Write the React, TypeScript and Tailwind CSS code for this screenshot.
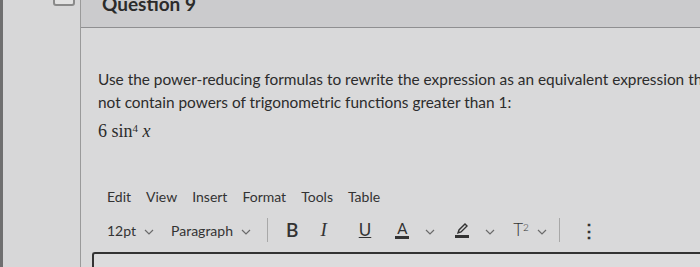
import React from "react";

const Chevron = () => (
  <svg width="10" height="6" viewBox="0 0 10 6" className="inline-block">
    <path d="M1 1l4 4 4-4" fill="none" stroke="#6b6b6b" strokeWidth="1.2" />
  </svg>
);

export default function App() {
  return (
    <div
      className="w-[700px] h-[267px] overflow-hidden flex bg-[#d9d9da] text-[#2a2a2a]"
      style={{ fontFamily: "Lato, 'Open Sans', sans-serif" }}
    >
      {/* left column */}
      <div className="w-[81px] shrink-0 border-l-[3px] border-[#6f6f70] border-r border-r-[#9a9a9a] bg-[#d7d7d8] relative">
        <div className="absolute left-[50px] top-[-8px] w-[22px] h-[14px] border-2 border-[#8a8a8a] rounded-[3px] bg-[#e2e2e2]" />
      </div>
      {/* main */}
      <div className="flex-1 flex flex-col">
        <div className="h-[28px] bg-[#cbcbcd] border-b border-[#8f8f91] relative">
          <div className="absolute left-[21px] top-[-10px] text-[19px] font-bold text-[#2b2b2b] whitespace-nowrap">
            Question 9
          </div>
        </div>
        <div className="pl-[17px] pt-[40px] text-[15.4px] leading-[23px] whitespace-nowrap text-[#2c2c2c]">
          <div>Use the power-reducing formulas to rewrite the expression as an equivalent expression that does</div>
          <div>not contain powers of trigonometric functions greater than 1:</div>
          <div
            className="mt-[6px] text-[18px]"
            style={{ fontFamily: "'Liberation Serif', 'DejaVu Serif', serif" }}
          >
            6 sin<sup className="text-[11px]">4</sup> <i>x</i>
          </div>
        </div>
        <div className="pl-[26px] mt-[43px] flex gap-[15px] text-[14px] text-[#333]">
          <span>Edit</span>
          <span>View</span>
          <span>Insert</span>
          <span>Format</span>
          <span>Tools</span>
          <span>Table</span>
        </div>
        <div className="pl-[26px] mt-[10px] flex items-center text-[14px] text-[#333] h-[26px]">
          <span>12pt</span>
          <span className="ml-[8px]"><Chevron /></span>
          <span className="ml-[17px]">Paragraph</span>
          <span className="ml-[8px]"><Chevron /></span>
          <span className="ml-[16px] w-px h-[24px] bg-[#a8a8a8]" />
          <span className="ml-[18px] text-[19px] font-semibold">B</span>
          <span className="ml-[22px] text-[19px] italic" style={{ fontFamily: "'Liberation Serif', serif" }}>I</span>
          <span className="ml-[32px] text-[17px] underline">U</span>
          <span className="ml-[24px] flex flex-col items-center leading-none">
            <span className="text-[15px]">A</span>
            <span className="w-[14px] h-[3px] bg-[#333]" />
          </span>
          <span className="ml-[16px]"><Chevron /></span>
          <span className="ml-[20px] flex flex-col items-center leading-none">
            <svg width="14" height="12" viewBox="0 0 14 12">
              <path d="M3 10l1-3 6-6 2 2-6 6z" fill="none" stroke="#333" strokeWidth="1.4" />
            </svg>
            <span className="w-[14px] h-[3px] bg-[#333]" />
          </span>
          <span className="ml-[16px]"><Chevron /></span>
          <span className="ml-[18px] text-[17px] font-light">T<sup className="text-[10px]">2</sup></span>
          <span className="ml-[8px]"><Chevron /></span>
          <span className="ml-[12px] w-px h-[24px] bg-[#a8a8a8]" />
          <span className="ml-[20px] text-[18px] font-bold">⋮</span>
        </div>
        <div className="ml-[11px] mt-[9px] flex-1 border-t-2 border-l-2 border-[#333] rounded-tl-[3px] bg-[#dcdcdd]" />
      </div>
    </div>
  );
}
